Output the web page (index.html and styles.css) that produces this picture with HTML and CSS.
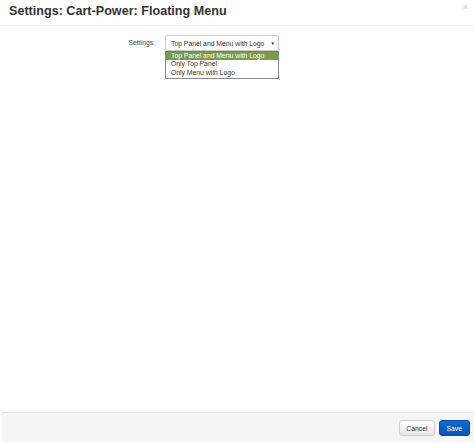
FILE: index.html
```html
<!DOCTYPE html>
<html>
<head>
<meta charset="utf-8">
<link rel="stylesheet" href="styles.css">
</head>
<body>
<div class="modal">
  <div class="modal-header">
    <h3 class="title">Settings: Cart-Power: Floating Menu</h3>
    <span class="close">×</span>
  </div>
  <div class="modal-body">
    <div class="row">
      <label class="label">Settings:</label>
      <div class="select-wrap">
        <div class="select">
          <span>Top Panel and Menu with Logo</span>
          <span class="caret">▼</span>
        </div>
        <ul class="options">
          <li class="opt active">Top Panel and Menu with Logo</li>
          <li class="opt">Only Top Panel</li>
          <li class="opt">Only Menu with Logo</li>
        </ul>
      </div>
    </div>
  </div>
  <div class="modal-footer">
    <button class="btn">Cancel</button>
    <button class="btn btn-primary">Save</button>
  </div>
</div>
</body>
</html>
```
FILE: styles.css
```css
* {
  box-sizing: border-box;
}
html, body {
  margin: 0;
  padding: 0;
  background: #fff;
  overflow: hidden;
}
body {
  font-family: "Liberation Sans", Arial, sans-serif;
  color: #333;
}
.modal {
  width: 474px;
  height: 443px;
  display: flex;
  flex-direction: column;
}
.modal-header {
  height: 26px;
  border-bottom: 1px solid #eee;
  display: flex;
  justify-content: space-between;
  align-items: flex-start;
  padding: 0 6px 0 9px;
}
.title {
  margin: 3px 0 0 0;
  font-size: 12.6px;
  font-weight: bold;
  color: #333;
  line-height: 17px;
}
.close {
  font-size: 9px;
  color: #ccc;
  line-height: 9px;
  margin-top: 3px;
}
.modal-body {
  flex: 1;
  padding-top: 9px;
}
.row {
  display: flex;
  align-items: flex-start;
}
.label {
  width: 155px;
  text-align: right;
  font-size: 6.8px;
  color: #444;
  padding-top: 4px;
  margin-right: 10px;
}
.select-wrap {
  width: 114px;
}
.select {
  height: 16px;
  border: 1px solid #ccc;
  border-radius: 2px;
  display: flex;
  justify-content: space-between;
  align-items: center;
  padding: 0 3px 0 5px;
  font-size: 6.8px;
  color: #333;
}
.caret {
  font-size: 4.5px;
  color: #222;
}
.options {
  list-style: none;
  margin: 0;
  padding: 0 0 1px 0;
  border: 1px solid #888;
  border-top: none;
  font-size: 6.8px;
  line-height: 8.3px;
  color: #333;
}
.opt {
  padding-left: 5px;
}
.opt.active {
  background: #7a9a4c;
  color: #fff;
  border-top: 1px solid #6a8a3c;
}
.modal-footer {
  height: 30px;
  margin: 0 0 1px 2px;
  background: #f5f5f5;
  border-top: 1px solid #e6e6e6;
  display: flex;
  justify-content: flex-end;
  align-items: center;
  gap: 4px;
  padding-right: 4px;
}
.btn {
  height: 16px;
  font-family: "Liberation Sans", Arial, sans-serif;
  font-size: 6.8px;
  border-radius: 3px;
  border: 1px solid #ccc;
  background: linear-gradient(#ffffff, #e6e6e6);
  color: #333;
  padding: 0 6px;
  margin-top: 1px;
}
.btn-primary {
  background: linear-gradient(#0a6fd1, #0a50bd);
  border-color: #0a4fb0;
  color: #fff;
  padding: 0 7px;
}
```
